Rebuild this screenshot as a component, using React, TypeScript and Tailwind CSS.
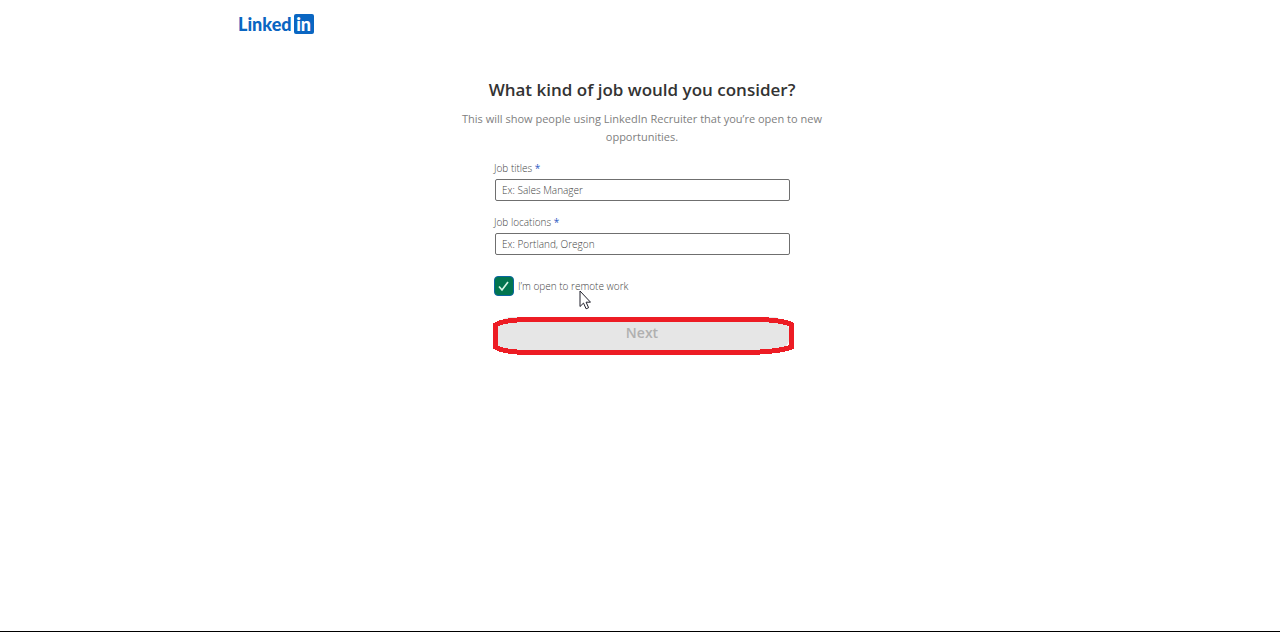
const fields = [
  { id: "job-titles", label: "Job titles", placeholder: "Ex: Sales Manager" },
  { id: "job-locations", label: "Job locations", placeholder: "Ex: Portland, Oregon" },
];

function Logo() {
  return (
    <a href="#home" aria-label="LinkedIn" className="flex w-fit items-center gap-0.5 font-['Lato',sans-serif] text-lg leading-5 font-black text-[#0a66c2]">
      <span>Linked</span>
      <span className="flex h-5 w-5 items-center justify-center rounded-xs bg-[#0a66c2] text-white">in</span>
    </a>
  );
}

function Pointer() {
  return (
    <svg className="pointer-events-none absolute top-[22px] left-[85px] h-5 w-3" viewBox="0 0 12 20" aria-hidden="true">
      <path d="M1 1v15.500l3.500-3.400 2.600 5.700 2.500-1.100-2.500-5.500h4.400z" fill="#fff" stroke="#1f1f2b" strokeWidth="1" />
    </svg>
  );
}

// Hand-drawn marker around the submit button
function Marker() {
  return (
    <svg className="pointer-events-none absolute -top-px -left-0.5 h-[39px] w-[303px]" viewBox="0 0 303 39" aria-hidden="true">
      <path
        d="M40 3.500H262C280 3.500 292 5 299.500 8.500V31C290 34.500 278 36.500 250 36.500H40C22 36.500 8 34.500 3.500 31V9C8 6 18 3.500 40 3.500Z"
        fill="none"
        stroke="#ed1c24"
        strokeWidth="5"
        shapeRendering="crispEdges"
      />
    </svg>
  );
}

export default function App() {
  return (
    <div className="flex min-h-screen flex-col border-b border-black bg-white font-['Open_Sans',sans-serif]">
      <header className="mx-auto w-full max-w-[804px] pt-3.5">
        <Logo />
      </header>

      <main className="mx-auto w-full max-w-[804px] pt-11 pl-1">
        <h1 className="text-center text-[17px] leading-6 font-semibold text-[#333]">
          What kind of job would you consider?
        </h1>
        <p className="mx-auto mt-2 max-w-[380px] text-center text-[11px] leading-[18px] text-[#808080]">
          This will show people using LinkedIn Recruiter that you’re open to new opportunities.
        </p>

        <form className="mx-auto mt-3.5 w-[296px]">
          {fields.map((f) => (
            <div key={f.id} className="mb-[13px]">
              <label htmlFor={f.id} className="block text-[10px] leading-4 font-light text-[#444]">
                {f.label} <span className="font-normal text-[#2f5bc4]">*</span>
              </label>
              <div className="pt-[3px] pl-px">
                <input
                  id={f.id}
                  type="text"
                  placeholder={f.placeholder}
                  className="block h-[22px] w-full rounded-xs border border-[#6f6f6f] px-1.5 text-[10px] font-light text-[#333] placeholder:text-[#444]"
                />
              </div>
            </div>
          ))}

          <div className="relative flex items-center gap-1 pt-2">
            <span className="grid">
              <input
                id="remote"
                type="checkbox"
                defaultChecked
                className="col-start-1 row-start-1 h-5 w-5 appearance-none rounded-sm border border-[#0a66a2] bg-[#01754f]"
              />
              <svg className="pointer-events-none col-start-1 row-start-1 h-5 w-5" viewBox="0 0 20 20" fill="none" aria-hidden="true">
                <path d="M5 10.500l3 3.500 6-8" stroke="#d5f5e5" strokeWidth="1.700" />
              </svg>
            </span>
            <label htmlFor="remote" className="text-[10px] leading-4 font-light text-[#444]">
              I’m open to remote work
            </label>
            <Pointer />
          </div>

          <div className="relative mt-[21px]">
            <button type="submit" className="block h-9 w-full rounded-full bg-[#e6e6e6] pb-1 text-sm font-semibold text-[#b0b0b0]">
              Next
            </button>
            <Marker />
          </div>
        </form>
      </main>
    </div>
  );
}
